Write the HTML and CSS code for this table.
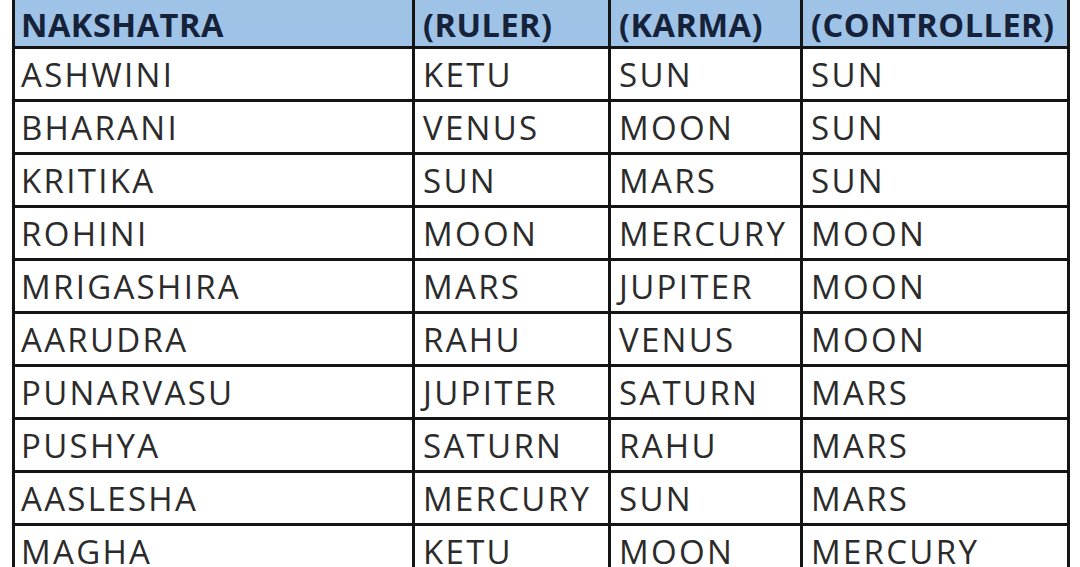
FILE: index.html
```html
<!DOCTYPE html>
<html>
<head>
<meta charset="utf-8">
<link rel="stylesheet" href="styles.css">
</head>
<body>
<div class="page">
<table class="grid">
  <colgroup>
    <col class="c1"><col class="c2"><col class="c3"><col class="c4">
  </colgroup>
  <thead>
    <tr><th>NAKSHATRA</th><th>(RULER)</th><th>(KARMA)</th><th>(CONTROLLER)</th></tr>
  </thead>
  <tbody>
    <tr><td>ASHWINI</td><td>KETU</td><td>SUN</td><td>SUN</td></tr>
    <tr><td>BHARANI</td><td>VENUS</td><td>MOON</td><td>SUN</td></tr>
    <tr><td>KRITIKA</td><td>SUN</td><td>MARS</td><td>SUN</td></tr>
    <tr><td>ROHINI</td><td>MOON</td><td>MERCURY</td><td>MOON</td></tr>
    <tr><td>MRIGASHIRA</td><td>MARS</td><td>JUPITER</td><td>MOON</td></tr>
    <tr><td>AARUDRA</td><td>RAHU</td><td>VENUS</td><td>MOON</td></tr>
    <tr><td>PUNARVASU</td><td>JUPITER</td><td>SATURN</td><td>MARS</td></tr>
    <tr><td>PUSHYA</td><td>SATURN</td><td>RAHU</td><td>MARS</td></tr>
    <tr><td>AASLESHA</td><td>MERCURY</td><td>SUN</td><td>MARS</td></tr>
    <tr><td>MAGHA</td><td>KETU</td><td>MOON</td><td>MERCURY</td></tr>
  </tbody>
</table>
</div>
</body>
</html>
```
FILE: styles.css
```css
html, body {
  margin: 0;
  padding: 0;
  background: #ffffff;
  overflow: hidden;
}
.page {
  width: 1080px;
  height: 567px;
  overflow: hidden;
  padding-left: 12px;
  box-sizing: border-box;
}
.grid {
  border-collapse: collapse;
  table-layout: fixed;
  width: 1055px;
  font-family: "Open Sans", "Liberation Sans", sans-serif;
}
.c1 { width: 400px; }
.c2 { width: 196px; }
.c3 { width: 192px; }
.c4 { width: 267px; }
.grid th, .grid td {
  border: 3px solid #141414;
  text-align: left;
  white-space: nowrap;
  overflow: hidden;
  padding: 0 0 0 6px;
}
.grid thead th {
  border-top: none;
  background: #9ec3e6;
  color: #15223a;
  font-weight: 700;
  font-size: 32.5px;
  letter-spacing: 0.5px;
  height: 47px;
  line-height: 34px;
  padding-top: 8px;
  box-sizing: border-box;
  vertical-align: top;
}
.grid tbody td {
  background: #ffffff;
  color: #2b2b2b;
  font-size: 33px;
  letter-spacing: 2.3px;
  height: 48px;
  line-height: 48px;
  padding-top: 2px;
}
.grid td + td, .grid th + th {
  padding-left: 8px;
}
```
